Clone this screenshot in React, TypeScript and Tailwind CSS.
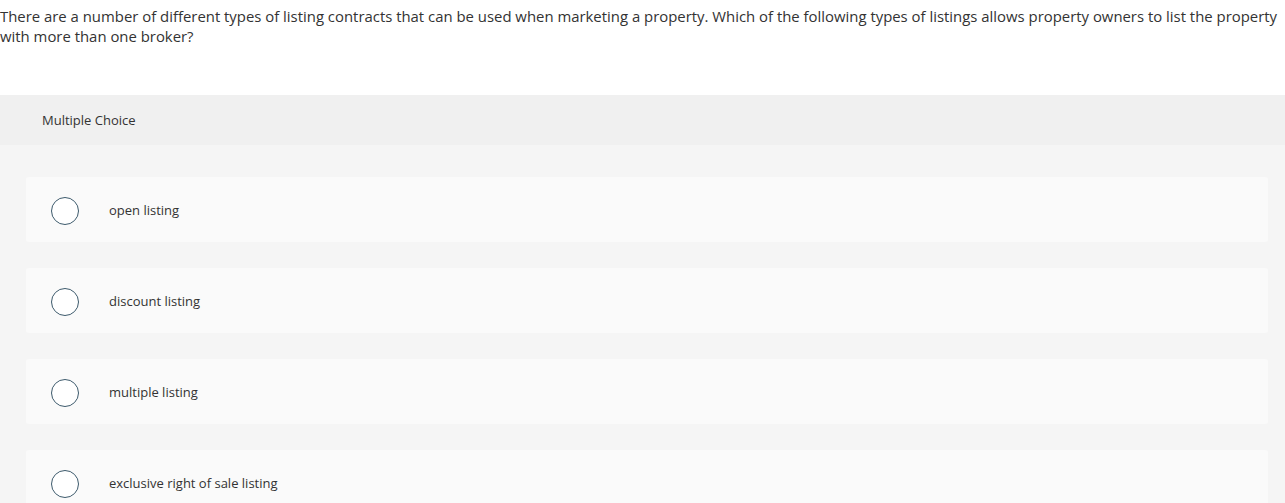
import React from 'react';

const options = [
  'open listing',
  'discount listing',
  'multiple listing',
  'exclusive right of sale listing',
];

// Multiple choice question card
const App: React.FC = () => {
  return (
    <div className="min-h-screen bg-white text-[#333] font-['Open_Sans',sans-serif]">
      <p className="text-[14.9px] leading-[20px] pt-[6px] pb-[49px]">
        There are a number of different types of listing contracts that can be used when marketing a property. Which of the following types of listings allows property owners to list the property with more than one broker?
      </p>

      <div className="h-[50px] bg-[#f0f0f0] flex items-center pl-[42px] pt-[2px]">
        <span className="text-[13px] text-[#333]">Multiple Choice</span>
      </div>

      <div className="bg-[#f5f5f5] pt-[32px] pb-10 pl-[26px] pr-[17px] flex flex-col gap-[26px]">
        {options.map((opt) => (
          <div
            key={opt}
            className="h-[65px] bg-[#fafafa] rounded-[3px] flex items-center pl-[25px] pt-[2px]"
          >
            <span className="w-[28px] h-[28px] rounded-full border-[1.5px] border-[#3d5a6c] bg-white shrink-0" />
            <span className="ml-[30px] text-[13px] text-[#333]">{opt}</span>
          </div>
        ))}
      </div>
    </div>
  );
};

export default App;
